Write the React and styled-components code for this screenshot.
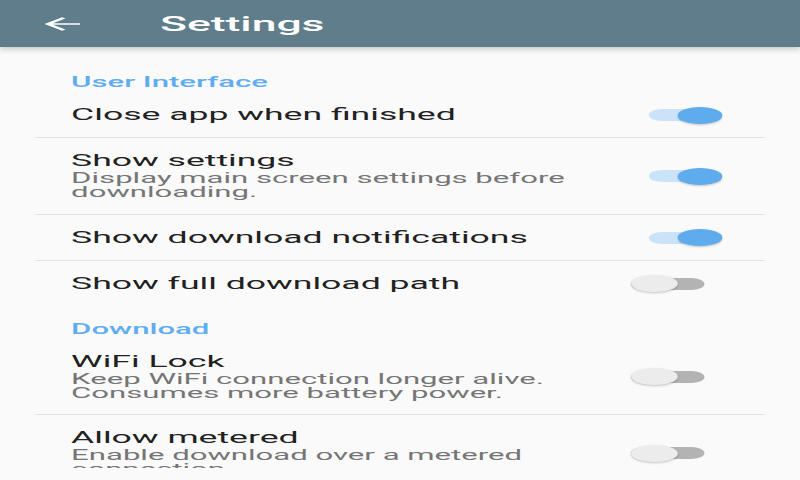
import React from 'react';
import styled, { createGlobalStyle } from 'styled-components';

const Global = createGlobalStyle`
  html, body { margin: 0; padding: 0; background: #fafafa; overflow: hidden; }
  body { font-family: Roboto, "Noto Sans", "Liberation Sans", sans-serif; }
`;

const Stage = styled.div`
  width: 360px;
  height: 480px;
  transform: scaleX(2.2222);
  transform-origin: 0 0;
  background: #fafafa;
  display: flex;
  flex-direction: column;
  overflow: hidden;
`;

const Toolbar = styled.header`
  height: 47px;
  flex: none;
  background: #607d8b;
  display: flex;
  align-items: center;
  padding-left: 16px;
  box-shadow: 0 2px 4px rgba(0, 0, 0, 0.22);
  position: relative;
  z-index: 1;
`;

const BackIcon = styled.svg`
  width: 24px;
  height: 20px;
  flex: none;
  fill: #ffffff;
`;

const Title = styled.h1`
  margin: 0 0 0 32px;
  color: #ffffff;
  font-size: 20px;
  font-weight: 500;
  line-height: 24px;
`;

const Main = styled.main`
  height: 421px;
  flex: none;
  overflow: hidden;
`;

const List = styled.div`
  margin: 0 16px;
  padding-top: 12px;
`;

const Category = styled.div`
  padding: 13px 0 0 16px;
  font-size: 14px;
  line-height: 20px;
  font-weight: 500;
  color: #5fadf0;
`;

const Row = styled.div`
  display: flex;
  align-items: center;
  padding: 13px 0 12px 16px;
  border-bottom: ${(p) => (p.$last ? 'none' : '1px solid #e2e2e2')};
`;

const TextCol = styled.div`
  flex: 1;
  min-width: 0;
`;

const RowTitle = styled.div`
  font-size: 16px;
  line-height: 20px;
  color: #212121;
`;

const Summary = styled.div`
  font-size: 14px;
  line-height: 14px;
  color: #757575;
  padding-bottom: 2.5px;
`;

const SwitchBox = styled.div`
  position: relative;
  flex: none;
  width: 33px;
  height: 17px;
  margin-left: 16px;
  margin-right: ${(p) => (p.$on ? 19 : 27)}px;
`;

const Track = styled.div`
  position: absolute;
  left: 0;
  right: 0;
  top: 2.5px;
  height: 12px;
  border-radius: 6px;
  background: ${(p) => (p.$on ? '#cbe3f8' : '#b3b3b3')};
`;

const Thumb = styled.div`
  position: absolute;
  top: 0;
  ${(p) => (p.$on ? 'right: 0;' : 'left: 0;')}
  width: 20.5px;
  height: 17px;
  border-radius: 50%;
  background: ${(p) => (p.$on ? '#5eacee' : '#ececec')};
  box-shadow: 0 1px 1.5px rgba(0, 0, 0, 0.22);
`;

const Switch = ({ on }) => (
  <SwitchBox $on={on}>
    <Track $on={on} />
    <Thumb $on={on} />
  </SwitchBox>
);

const Pref = ({ title, summary, on, last }) => (
  <Row $last={last}>
    <TextCol>
      <RowTitle>{title}</RowTitle>
      {summary && <Summary>{summary}</Summary>}
    </TextCol>
    <Switch on={on} />
  </Row>
);

export default function App() {
  return (
    <>
      <Global />
      <Stage>
        <Toolbar>
          <BackIcon viewBox="0 0 24 24" preserveAspectRatio="none">
            <path d="M20 11H7.83l5.59-5.59L12 4l-8 8 8 8 1.41-1.41L7.83 13H20v-2z" />
          </BackIcon>
          <Title>Settings</Title>
        </Toolbar>
        <Main>
          <List>
            <Category>User Interface</Category>
            <Pref title="Close app when finished" on />
            <Pref
              title="Show settings"
              summary="Display main screen settings before downloading."
              on
            />
            <Pref title="Show download notifications" on />
            <Pref title="Show full download path" last />
            <Category>Download</Category>
            <Pref
              title="WiFi Lock"
              summary="Keep WiFi connection longer alive. Consumes more battery power."
            />
            <Pref
              title="Allow metered"
              summary="Enable download over a metered connection."
              last
            />
          </List>
        </Main>
      </Stage>
    </>
  );
}
